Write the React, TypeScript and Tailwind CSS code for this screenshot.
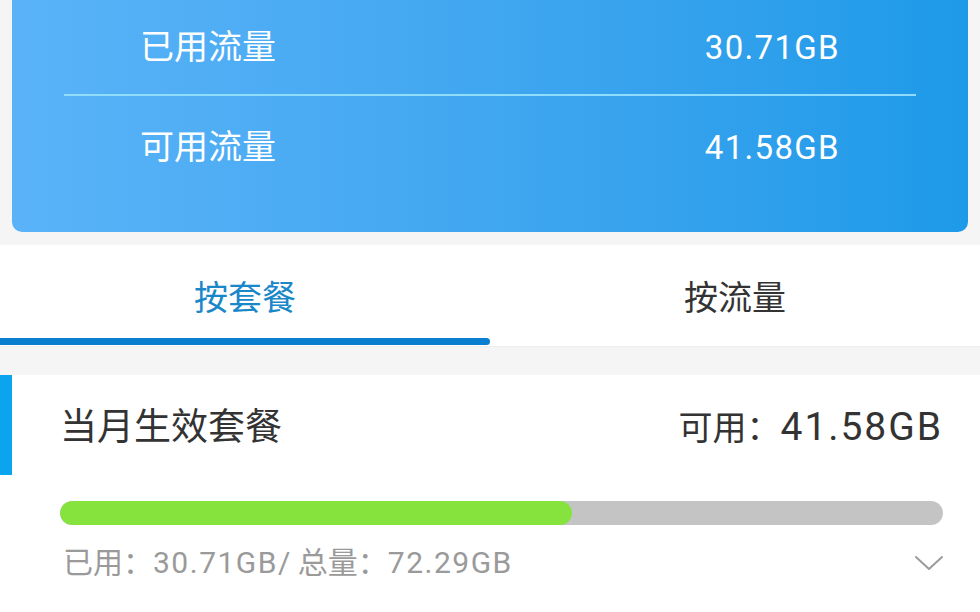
import React from 'react';

const font = { fontFamily: 'Roboto, "Noto Sans CJK SC", sans-serif' };

function StatRow({ label, value, tall }: { label: string; value: string; tall?: boolean }) {
  return (
    <div className={`flex items-center justify-between px-[76px] ${tall ? 'h-[102px]' : 'h-[94px]'}`}>
      <span className="text-[34px] leading-none text-white">{label}</span>
      <span className="text-[33px] leading-none tracking-[0.04em] text-white">{value}</span>
    </div>
  );
}

export default function App() {
  // bar fill as shown by the app
  const pct = 58;

  return (
    <div className="h-[612px] w-full overflow-hidden bg-[#f5f5f5]" style={font}>
      {/* traffic summary card */}
      <div className="mx-[12px] h-[232px] rounded-b-[10px] bg-linear-to-r from-[#5ab3f8] to-[#1c9ae8]">
        <div className="mx-[52px]">
          <StatRow label="已用流量" value="30.71GB" />
          <div className="h-[2px] bg-[#8fdcfb]" />
          <StatRow label="可用流量" value="41.58GB" tall />
        </div>
      </div>

      {/* tabs */}
      <div className="mt-[13px] flex h-[102px] border-b border-[#eeeeee] bg-white">
        <div className="flex flex-1 flex-col">
          <div className="flex flex-1 items-center justify-center pt-[12px] text-[34px] leading-none text-[#1a87c9]">
            按套餐
          </div>
          <div className="mb-px h-[7px] rounded-r-full bg-[#0b7fcf]" />
        </div>
        <div className="flex flex-1 flex-col">
          <div className="flex flex-1 items-center justify-center pt-[12px] text-[34px] leading-none text-[#333333]">
            按流量
          </div>
          <div className="mb-px h-[7px]" />
        </div>
      </div>

      {/* package card */}
      <div className="relative mt-[28px] bg-white pb-[40px] pl-[60px] pr-[37px] pt-[28px]">
        <div className="absolute left-0 top-0 h-[100px] w-[12px] bg-[#0aa5ee]" />
        <div className="flex h-[48px] items-center justify-between">
          <span className="text-[37px] leading-none text-[#333333]">当月生效套餐</span>
          <span className="flex items-baseline text-[#333333]">
            <span className="text-[34px] leading-none">可用：</span>
            <span className="text-[39px] leading-none tracking-[0.05em]">41.58GB</span>
          </span>
        </div>
        <div className="mt-[50px] h-[24px] overflow-hidden rounded-full bg-[#c4c4c4]">
          <div className="h-full rounded-full bg-[#86e33e]" style={{ width: `${pct}%` }} />
        </div>
        <div className="mt-[20px] flex h-[36px] items-center justify-between">
          <span className="pl-[3px] text-[30px] leading-none text-[#9a9a9a]">
            已用：<span className="tracking-[0.05em]">30.71GB</span>/ 总量：
            <span className="tracking-[0.05em]">72.29GB</span>
          </span>
          <svg width="30" height="18" viewBox="0 0 30 18" fill="none" className="mr-[-1px]">
            <polyline points="2,3 15,15 28,3" stroke="#9b9b9b" strokeWidth="2" strokeLinecap="round" strokeLinejoin="round" />
          </svg>
        </div>
      </div>
    </div>
  );
}
